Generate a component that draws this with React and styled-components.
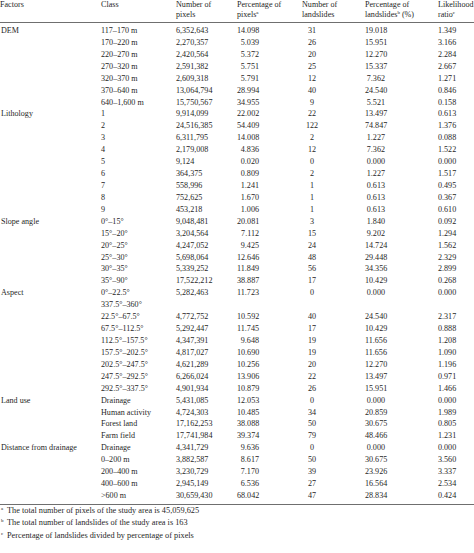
import styled, { createGlobalStyle } from "styled-components";

const GlobalStyle = createGlobalStyle`
    html, body {
        margin: 0;
        padding: 0;
        background: #ffffff;
    }
`;

const Page = styled.div`
    width: 474px;
    font-family: "Liberation Serif", "Times New Roman", serif;
    font-size: 8.1px;
    color: #1f1f1f;
`;

const Table = styled.table`
    width: 474px;
    border-collapse: collapse;
    table-layout: fixed;
    border-bottom: 1px solid #6f6f6f;
`;

const HeadCell = styled.th`
    font-weight: normal;
    text-align: left;
    vertical-align: top;
    line-height: 9.5px;
    padding: 0;
    padding-bottom: 3px;
    border-bottom: 1px solid #6f6f6f;
    white-space: nowrap;
`;

const Row = styled.tr`
    height: 11.925px;

    &:first-child td {
        padding-top: 2px;
    }

    &:last-child td {
        padding-bottom: 2px;
    }
`;

const Cell = styled.td`
    padding: 0 0 0 ${({ $indent }) => $indent || 0}px;
    line-height: 11.925px;
    white-space: nowrap;
`;

const Num = styled.span`
    display: inline-block;
    width: ${({ $w }) => $w || 22}px;
    text-align: ${({ $center }) => ($center ? "center" : "right")};
`;

const Sup = styled.sup`
    font-size: 5px;
    line-height: 0;
    vertical-align: 3px;
`;

const Notes = styled.div`
    font-size: 8.3px;
`;

const Note = styled.div`
    line-height: 12.5px;
    padding-left: 1px;
    white-space: nowrap;
`;

const NoteMark = styled.sup`
    font-size: 5px;
    line-height: 0;
    vertical-align: 3px;
    display: inline-block;
    width: 6px;
`;

const groups = [
    ["DEM", [
        ["117–170 m", "6,352,643", "14.098", "31", "19.018", "1.349"],
        ["170–220 m", "2,270,357", "5.039", "26", "15.951", "3.166"],
        ["220–270 m", "2,420,564", "5.372", "20", "12.270", "2.284"],
        ["270–320 m", "2,591,382", "5.751", "25", "15.337", "2.667"],
        ["320–370 m", "2,609,318", "5.791", "12", "7.362", "1.271"],
        ["370–640 m", "13,064,794", "28.994", "40", "24.540", "0.846"],
        ["640–1,600 m", "15,750,567", "34.955", "9", "5.521", "0.158"],
    ]],
    ["Lithology", [
        ["1", "9,914,099", "22.002", "22", "13.497", "0.613"],
        ["2", "24,516,385", "54.409", "122", "74.847", "1.376"],
        ["3", "6,311,795", "14.008", "2", "1.227", "0.088"],
        ["4", "2,179,008", "4.836", "12", "7.362", "1.522"],
        ["5", "9,124", "0.020", "0", "0.000", "0.000"],
        ["6", "364,375", "0.809", "2", "1.227", "1.517"],
        ["7", "558,996", "1.241", "1", "0.613", "0.495"],
        ["8", "752,625", "1.670", "1", "0.613", "0.367"],
        ["9", "453,218", "1.006", "1", "0.613", "0.610"],
    ]],
    ["Slope angle", [
        ["0°–15°", "9,048,481", "20.081", "3", "1.840", "0.092"],
        ["15°–20°", "3,204,564", "7.112", "15", "9.202", "1.294"],
        ["20°–25°", "4,247,052", "9.425", "24", "14.724", "1.562"],
        ["25°–30°", "5,698,064", "12.646", "48", "29.448", "2.329"],
        ["30°–35°", "5,339,252", "11.849", "56", "34.356", "2.899"],
        ["35°–90°", "17,522,212", "38.887", "17", "10.429", "0.268"],
    ]],
    ["Aspect", [
        ["0°–22.5°", "5,282,463", "11.723", "0", "0.000", "0.000"],
        ["337.5°–360°", "", "", "", "", ""],
        ["22.5°–67.5°", "4,772,752", "10.592", "40", "24.540", "2.317"],
        ["67.5°–112.5°", "5,292,447", "11.745", "17", "10.429", "0.888"],
        ["112.5°–157.5°", "4,347,391", "9.648", "19", "11.656", "1.208"],
        ["157.5°–202.5°", "4,817,027", "10.690", "19", "11.656", "1.090"],
        ["202.5°–247.5°", "4,621,289", "10.256", "20", "12.270", "1.196"],
        ["247.5°–292.5°", "6,266,024", "13.906", "22", "13.497", "0.971"],
        ["292.5°–337.5°", "4,901,934", "10.879", "26", "15.951", "1.466"],
    ]],
    ["Land use", [
        ["Drainage", "5,431,085", "12.053", "0", "0.000", "0.000"],
        ["Human activity", "4,724,303", "10.485", "34", "20.859", "1.989"],
        ["Forest land", "17,162,253", "38.088", "50", "30.675", "0.805"],
        ["Farm field", "17,741,984", "39.374", "79", "48.466", "1.231"],
    ]],
    ["Distance from drainage", [
        ["Drainage", "4,341,729", "9.636", "0", "0.000", "0.000"],
        ["0–200 m", "3,882,587", "8.617", "50", "30.675", "3.560"],
        ["200–400 m", "3,230,729", "7.170", "39", "23.926", "3.337"],
        ["400–600 m", "2,945,149", "6.536", "27", "16.564", "2.534"],
        [">600 m", "30,659,430", "68.042", "47", "28.834", "0.424"],
    ]],
];

const rows = groups.flatMap(([factor, items]) =>
    items.map((item, i) => [i === 0 ? factor : "", ...item])
);

function App() {
    return (
        <Page>
            <GlobalStyle />

            <Table>
                <colgroup>
                    <col style={{ width: 101 }} />
                    <col style={{ width: 75 }} />
                    <col style={{ width: 61 }} />
                    <col style={{ width: 65 }} />
                    <col style={{ width: 63 }} />
                    <col style={{ width: 73 }} />
                    <col style={{ width: 36 }} />
                </colgroup>

                <thead>
                    <tr>
                        <HeadCell>Factors</HeadCell>
                        <HeadCell>Class</HeadCell>
                        <HeadCell>Number of<br />pixels</HeadCell>
                        <HeadCell>Percentage of<br />pixels<Sup>a</Sup></HeadCell>
                        <HeadCell>Number of<br />landslides</HeadCell>
                        <HeadCell>Percentage of<br />landslides<Sup>b</Sup> (%)</HeadCell>
                        <HeadCell>Likelihood<br />ratio<Sup>c</Sup></HeadCell>
                    </tr>
                </thead>

                <tbody>
                    {rows.map((r, i) => (
                        <Row key={i}>
                            <Cell $indent={1}>{r[0]}</Cell>
                            <Cell>{r[1]}</Cell>
                            <Cell>{r[2]}</Cell>
                            <Cell><Num>{r[3]}</Num></Cell>
                            <Cell><Num $w={20} $center>{r[4]}</Num></Cell>
                            <Cell><Num $w={20}>{r[5]}</Num></Cell>
                            <Cell>{r[6]}</Cell>
                        </Row>
                    ))}
                </tbody>
            </Table>

            <Notes>
                <Note><NoteMark>a</NoteMark>The total number of pixels of the study area is 45,059,625</Note>
                <Note><NoteMark>b</NoteMark>The total number of landslides of the study area is 163</Note>
                <Note><NoteMark>c</NoteMark>Percentage of landslides divided by percentage of pixels</Note>
            </Notes>
        </Page>
    );
}

export default App;
